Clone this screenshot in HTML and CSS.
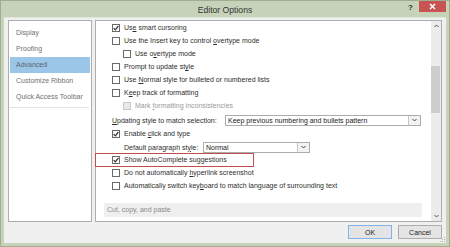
FILE: index.html
```html
<!DOCTYPE html>
<html>
<head>
<meta charset="utf-8">
<link rel="stylesheet" href="styles.css">
</head>
<body>
<div class="window">
  <div class="titlebar">
    <span></span>
    <span class="title">Editor Options</span>
    <div class="controls">
      <span class="help">?</span>
      <span class="close"><svg width="7" height="7" viewBox="0 0 7 7"><path d="M1 1L6 6M6 1L1 6" stroke="#fff" stroke-width="1.5"/></svg></span>
    </div>
  </div>
  <div class="client">
    <div class="main">
      <nav class="nav">
        <div class="nav-item">Display</div>
        <div class="nav-item">Proofing</div>
        <div class="nav-item selected">Advanced</div>
        <div class="nav-item">Customize Ribbon</div>
        <div class="nav-item">Quick Access Toolbar</div>
        <div class="nav-sep"></div>
      </nav>
      <div class="panel">
        <div class="content">
          <div class="row"><span class="cb checked"><svg width="8" height="8" viewBox="0 0 8 8"><path d="M1.6 4.1L3.3 5.8L6.4 2" fill="none" stroke="#333" stroke-width="1.2"/></svg></span><span class="txt">Us<u>e</u> smart cursoring</span></div>
          <div class="row"><span class="cb"></span><span class="txt">Use the Insert key to control <u>o</u>vertype mode</span></div>
          <div class="row indent"><span class="cb"></span><span class="txt">Use o<u>v</u>ertype mode</span></div>
          <div class="row"><span class="cb"></span><span class="txt">Prompt to update st<u>y</u>le</span></div>
          <div class="row"><span class="cb"></span><span class="txt">Use <u>N</u>ormal style for bulleted or numbered lists</span></div>
          <div class="row"><span class="cb"></span><span class="txt">K<u>e</u>ep track of formatting</span></div>
          <div class="row indent disabled"><span class="cb"></span><span class="txt">Mark <u>f</u>ormatting inconsistencies</span></div>
          <div class="row select-row">
            <span class="label wide"><u>U</u>pdating style to match selection:</span>
            <span class="select long"><span class="select-text">Keep previous numbering and bullets pattern</span><span class="select-btn"><svg width="5" height="4" viewBox="0 0 5 4"><path d="M0.5 1L2.5 3L4.5 1" fill="none" stroke="#444" stroke-width="1"/></svg></span></span>
          </div>
          <div class="row"><span class="cb checked"><svg width="8" height="8" viewBox="0 0 8 8"><path d="M1.6 4.1L3.3 5.8L6.4 2" fill="none" stroke="#333" stroke-width="1.2"/></svg></span><span class="txt">Enable <u>c</u>lick and type</span></div>
          <div class="row select-row sub">
            <span class="label narrow">Default paragraph st<u>y</u>le:</span>
            <span class="select short"><span class="select-text">Normal</span><span class="select-btn"><svg width="5" height="4" viewBox="0 0 5 4"><path d="M0.5 1L2.5 3L4.5 1" fill="none" stroke="#444" stroke-width="1"/></svg></span></span>
          </div>
          <div class="row marked"><span class="cb checked"><svg width="8" height="8" viewBox="0 0 8 8"><path d="M1.6 4.1L3.3 5.8L6.4 2" fill="none" stroke="#333" stroke-width="1.2"/></svg></span><span class="txt">Show AutoComplete suggestions</span><span class="highlight"></span></div>
          <div class="row"><span class="cb"></span><span class="txt">Do not automatically <u>h</u>yperlink screenshot</span></div>
          <div class="row"><span class="cb"></span><span class="txt">Automatically switch key<u>b</u>oard to match language of surrounding text</span></div>
          <div class="section">Cut, copy, and paste</div>
        </div>
        <div class="scrollbar">
          <span class="arrow"><svg width="5" height="4" viewBox="0 0 5 4"><path d="M0.5 3L2.5 1L4.5 3" fill="none" stroke="#555" stroke-width="1"/></svg></span>
          <span class="track"><span class="thumb"></span></span>
          <span class="arrow"><svg width="5" height="4" viewBox="0 0 5 4"><path d="M0.5 1L2.5 3L4.5 1" fill="none" stroke="#555" stroke-width="1"/></svg></span>
        </div>
      </div>
    </div>
    <div class="buttons">
      <button class="btn default">OK</button>
      <button class="btn">Cancel</button>
    </div>
    <span class="grip"><svg width="5" height="5" viewBox="0 0 5 5"><g fill="#b5b5b5"><rect x="4" y="0" width="1" height="1"/><rect x="2" y="2" width="1" height="1"/><rect x="4" y="2" width="1" height="1"/><rect x="0" y="4" width="1" height="1"/><rect x="2" y="4" width="1" height="1"/><rect x="4" y="4" width="1" height="1"/></g></svg></span>
  </div>
</div>
</body>
</html>
```
FILE: styles.css
```css
* { box-sizing: border-box; }
html, body { margin: 0; padding: 0; }
body {
  width: 450px;
  height: 247px;
  overflow: hidden;
  font-family: "Liberation Sans", Arial, sans-serif;
  font-size: 7px;
  color: #2e2e2e;
}
.window {
  width: 450px;
  height: 247px;
  background: #c6d3b8;
  border: 1px solid #9fae90;
  display: flex;
  flex-direction: column;
  padding: 0 3px 4px 3px;
}
.titlebar {
  height: 16px;
  display: grid;
  grid-template-columns: 1fr auto 1fr;
  align-items: start;
}
.title {
  font-size: 8.6px;
  color: #333;
  line-height: 16px;
  padding-top: 1px;
}
.controls {
  display: flex;
  justify-content: flex-end;
  align-items: flex-start;
}
.help {
  font-size: 8px;
  font-weight: bold;
  color: #333;
  line-height: 12px;
  margin-top: 1px;
  margin-right: 6px;
}
.close {
  width: 27px;
  height: 11px;
  background: #c75353;
  display: flex;
  align-items: center;
  justify-content: center;
}
.client {
  flex: 1;
  background: #f0f0f0;
  border-top: 1px solid #dfe6d8;
  padding: 2px 4px 4px 4px;
  display: flex;
  flex-direction: column;
  position: relative;
}
.main {
  height: 202px;
  display: flex;
  gap: 3px;
}
.nav {
  width: 84px;
  background: #fff;
  border: 1px solid #adadad;
  padding: 4px 0 0 0;
}
.nav-item {
  height: 16px;
  line-height: 16px;
  padding-left: 6px;
  margin: 0 1px;
  color: #707070;
}
.nav-item.selected {
  background: #9cc6e7;
  color: #5a6570;
}
.nav-sep {
  height: 1px;
  background: #e3e3e3;
  margin: 2px 2px 0 1px;
}
.panel {
  flex: 1;
  background: #fff;
  border: 1px solid #adadad;
  display: flex;
}
.content {
  flex: 1;
  position: relative;
}
.row {
  height: 13px;
  display: flex;
  align-items: center;
  padding-left: 16px;
  position: relative;
  white-space: nowrap;
}
.txt { white-space: pre; }
.row.indent { padding-left: 27px; }
.row.disabled { color: #9a9a9a; }
.cb {
  width: 8px;
  height: 8px;
  border: 1px solid #6a6a6a;
  background: #fff;
  margin-right: 4px;
  flex: none;
  display: flex;
  align-items: center;
  justify-content: center;
}
.cb svg { margin: -1px; }
.disabled .cb {
  border-color: #c9c9c9;
  background: #e8e8e8;
}
.select-row {
  height: 15px;
  padding-top: 1px;
}
.select-row.sub {
  height: 13px;
  padding-left: 28px;
}
.label { white-space: pre; }
.label.wide { width: 113px; }
.label.narrow { width: 79px; }
.select {
  height: 11px;
  border: 1px solid #acacac;
  background: #fff;
  display: flex;
  align-items: stretch;
}
.select.long { width: 196px; }
.select.short { width: 107px; }
.select-text {
  flex: 1;
  padding-left: 2px;
  line-height: 9px;
  color: #222;
}
.select-btn {
  width: 12px;
  border-left: 1px solid #c8c8c8;
  background: #f3f3f3;
  display: flex;
  align-items: center;
  justify-content: center;
}
.highlight {
  position: absolute;
  left: -1px;
  top: 0;
  width: 159px;
  height: 14px;
  border: 1.6px solid #bf4f4c;
}
.section {
  margin: 11px 9px 0 8px;
  height: 14px;
  line-height: 14px;
  background: #efefef;
  padding-left: 3px;
  color: #8a8a8a;
}
.scrollbar {
  width: 10px;
  background: #ececec;
  display: flex;
  flex-direction: column;
}
.arrow {
  height: 10px;
  display: flex;
  align-items: center;
  justify-content: center;
}
.arrow:last-child { margin-top: auto; }
.track {
  flex: 1;
  padding-top: 35px;
}
.thumb {
  display: block;
  width: 9px;
  margin-left: 0;
  height: 47px;
  background: #cdcdcd;
}
.buttons {
  margin-top: 3px;
  display: flex;
  justify-content: flex-end;
  gap: 6px;
  padding-right: 0;
}
.btn {
  width: 44px;
  height: 14px;
  padding: 0;
  font-family: "Liberation Sans", Arial, sans-serif;
  font-size: 7px;
  color: #222;
  background: #e4e4e4;
  border: 1px solid #adadad;
  border-radius: 0;
}
.btn.default { border-color: #7eb4ea; }
.grip {
  position: absolute;
  right: 1px;
  bottom: 1px;
  line-height: 0;
}
```
